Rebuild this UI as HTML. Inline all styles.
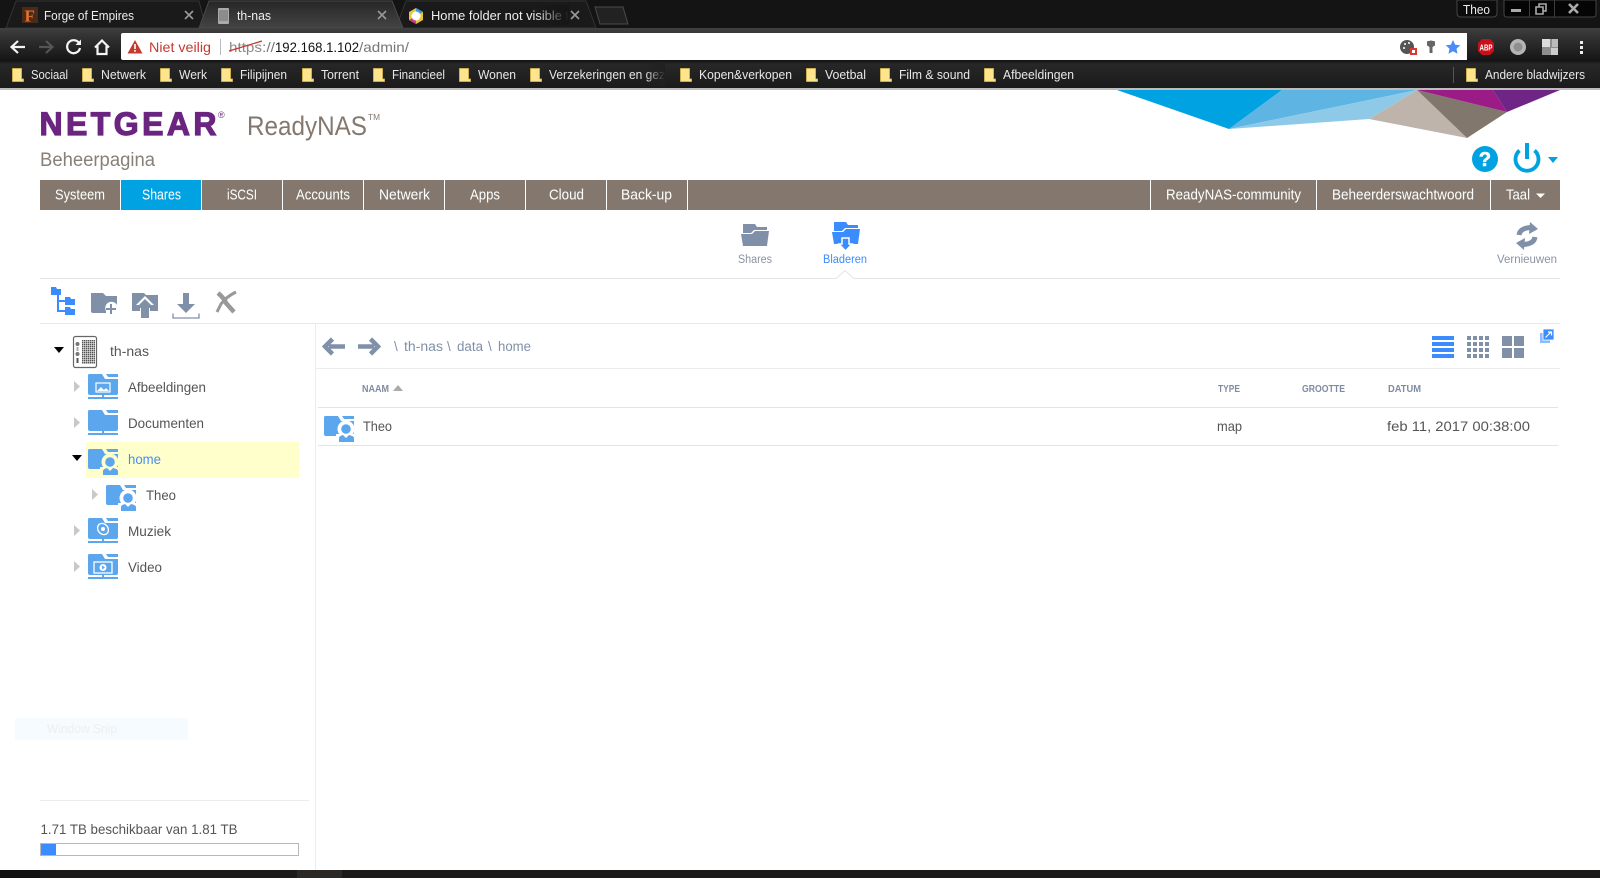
<!DOCTYPE html>
<html><head><meta charset="utf-8"><title>th-nas</title>
<style>
html,body{margin:0;padding:0;background:#fff;width:1600px;height:878px;overflow:hidden}
svg{display:block}
text{font-family:"Liberation Sans",sans-serif;font-size:14px}
.tb text{font-size:13px;fill:#e8e8e8}
.nav text{font-size:14.5px;fill:#fff}
.tree text{font-size:14px;fill:#555}
.hd text{font-size:10px;font-weight:bold;fill:#7f8ba3}
.ic{fill:#8190a9}
</style></head><body>
<svg width="1600" height="878" viewBox="0 0 1600 878" xmlns="http://www.w3.org/2000/svg">
<defs>
<linearGradient id="tbar" x1="0" y1="0" x2="0" y2="1"><stop offset="0" stop-color="#414141"/><stop offset=".2" stop-color="#353535"/><stop offset="1" stop-color="#161616"/></linearGradient>
<linearGradient id="acttab" x1="0" y1="0" x2="0" y2="1"><stop offset="0" stop-color="#262626"/><stop offset="1" stop-color="#444"/></linearGradient>
<linearGradient id="bm" x1="0" y1="0" x2="0" y2="1"><stop offset="0" stop-color="#111"/><stop offset=".15" stop-color="#272727"/><stop offset="1" stop-color="#1b1b1b"/></linearGradient>
<linearGradient id="fadeB" x1="0" y1="0" x2="1" y2="0"><stop offset="0" stop-color="#202020" stop-opacity="0"/><stop offset="1" stop-color="#202020"/></linearGradient>
<linearGradient id="fadeT" x1="0" y1="0" x2="1" y2="0"><stop offset="0" stop-color="#161616" stop-opacity="0"/><stop offset="1" stop-color="#161616"/></linearGradient>
<pattern id="dots" width="2" height="2" patternUnits="userSpaceOnUse"><rect width="1.5" height="1.5" fill="#555"/></pattern>
<symbol id="sf" viewBox="0 0 30 25" overflow="visible">
<path fill="#5ca6ee" d="M0 1.5Q0 0 1.5 0H14L17 5H30V19Q30 21 28 21H2Q0 21 0 19Z"/>
<path fill="#5ca6ee" d="M18 0H30V3H20Z"/>
<rect x="14" y="21" width="2" height="2" fill="#5ca6ee"/>
<rect x="0" y="23" width="30" height="2" fill="#5ca6ee"/>
</symbol>
<symbol id="uf" viewBox="0 0 30 26" overflow="visible">
<path fill="#5ca6ee" d="M0 1.5Q0 0 1.5 0H14L17 5H30V18Q30 20 28 20H2Q0 20 0 18Z"/>
<path fill="#5ca6ee" d="M18 0H30V3H20Z"/>
<circle cx="22" cy="13" r="8.500" fill="#fff"/>
<rect x="12" y="18" width="18" height="8.500" fill="#fff"/>
<path fill="#fff" d="M24 14H30V20H24Z" opacity="0"/>
<circle cx="22" cy="13" r="4.800" fill="#5ca6ee"/>
<path fill="#5ca6ee" d="M15 26V22Q15 20 19 19L22 22L25 19Q30 20 30 22V26Z"/>
</symbol>
<symbol id="bmf" viewBox="0 0 12 14" overflow="visible">
<path fill="#fde58e" stroke="#e0bb50" stroke-width=".8" d="M.5.5H9.5V11H11.5V13.5H.5Z"/>
</symbol>
</defs>

<!-- tab strip -->
<rect width="1600" height="28" fill="#141414"/>
<path d="M6 28L16 1H199L206 28Z" fill="#1a1a1a" stroke="#333"/>
<path d="M396 28L406 1H586L596 28Z" fill="#1a1a1a" stroke="#333"/>
<path d="M199 28L209 1H392L403 28Z" fill="url(#acttab)" stroke="#4a4a4a"/>
<path d="M595 7H623L628 24H600Z" fill="#222" stroke="#4a4a4a"/>
<rect x="22" y="7" width="16" height="16" fill="#4a2a18"/><text x="24.500" y="21.500" style="font-size:17px;font-family:'Liberation Serif',serif;font-weight:bold;fill:#e8702a">F</text>
<rect x="218" y="8" width="11" height="16" rx="1" fill="#aaa"/><rect x="219" y="10" width="9" height="11" fill="#8c8c8c"/>
<path d="M416 8L423 12V20L416 24L409 20V12Z" fill="#e8c63a"/><path d="M416 8L423 12L416 16Z" fill="#3a9ad9"/><path d="M409 20L416 24L416 16Z" fill="#c93a8c"/><circle cx="416" cy="16" r="4.500" fill="#fff"/>
<text x="44" y="20" textLength="90" lengthAdjust="spacingAndGlyphs" fill="#eee" style="font-size:13px">Forge of Empires</text>
<text x="237" y="20" textLength="34" lengthAdjust="spacingAndGlyphs" fill="#eee" style="font-size:13px">th-nas</text>
<text x="431" y="20" textLength="138" lengthAdjust="spacingAndGlyphs" fill="#eee" style="font-size:13px">Home folder not visible t</text>
<rect x="535" y="5" width="34" height="20" fill="url(#fadeT)"/>
<g stroke="#999" stroke-width="1.600"><path d="M185 11l8 8M193 11l-8 8"/><path d="M378 11l8 8M386 11l-8 8"/><path d="M571 11l8 8M579 11l-8 8"/></g>

<!-- window controls -->
<path d="M1457 0V13Q1457 17 1461 17H1493Q1497 17 1497 13V0Z" fill="#0c0c0c" stroke="#444"/>
<text x="1463" y="14" textLength="27" lengthAdjust="spacingAndGlyphs" fill="#eee" style="font-size:13px">Theo</text>
<path d="M1504 0V14Q1504 17 1507 17H1593Q1596 17 1596 14V0Z" fill="#050505" stroke="#444"/>
<path d="M1529.500 0V17M1554.500 0V17" stroke="#3c3c3c"/>
<rect x="1511" y="9" width="10" height="3" fill="#aaa"/>
<path d="M1536 7h7v7h-7zM1539 7V4h7v7h-3" fill="none" stroke="#aaa" stroke-width="1.600"/>
<path d="M1569 4l9 9M1578 4l-9 9" stroke="#aaa" stroke-width="2.600"/>

<!-- toolbar -->
<rect y="28" width="1600" height="32" fill="url(#tbar)"/>
<g fill="none" stroke-width="2.200">
<path d="M25 47H12M18 41l-6.500 6 6.500 6" stroke="#f4f4f4"/>
<path d="M39 47H52M46 41l6.500 6-6.500 6" stroke="#555"/>
<path d="M79 43A6.500 6.500 0 1 0 80 48" stroke="#f4f4f4"/>
<path d="M95 47.500L102 40.500 109 47.500M97.500 46V54H106.500V46" stroke="#f4f4f4"/>
</g>
<path d="M81 39.500V45H75.500Z" fill="#f4f4f4"/>
<path d="M121 35Q121 33 123 33H1467V60H123Q121 60 121 58Z" fill="#fff"/>
<path d="M135 40L142.500 53.500H127.500Z" fill="#c5392e"/><rect x="134.200" y="44" width="1.600" height="5" fill="#fff"/><rect x="134.200" y="50" width="1.600" height="1.700" fill="#fff"/>
<text x="149" y="52" textLength="62" lengthAdjust="spacingAndGlyphs" fill="#c5392e" style="font-size:14px">Niet veilig</text>
<rect x="220" y="39" width="1" height="16" fill="#bbb"/>
<text x="229" y="52" textLength="33" lengthAdjust="spacingAndGlyphs" fill="#8a8a8a" style="font-size:14px">https</text>
<path d="M229 51L262 41" stroke="#c5392e" stroke-width="1.300"/>
<text x="262" y="52" textLength="13" lengthAdjust="spacingAndGlyphs" fill="#777" style="font-size:14px">://</text>
<text x="275" y="52" textLength="84" lengthAdjust="spacingAndGlyphs" fill="#111" style="font-size:14px">192.168.1.102</text>
<text x="359" y="52" textLength="50" lengthAdjust="spacingAndGlyphs" fill="#777" style="font-size:14px">/admin/</text>
<!-- ext icons -->
<ellipse cx="1407" cy="47" rx="7" ry="7" fill="#555"/><circle cx="1405" cy="44" r="1" fill="#fff"/><circle cx="1409" cy="43" r="1" fill="#fff"/><circle cx="1404" cy="48" r="1" fill="#fff"/>
<rect x="1410" y="48" width="7" height="7" fill="#d83a34"/><rect x="1412" y="50" width="3" height="3" fill="#fff"/>
<circle cx="1431" cy="44" r="3.500" fill="#666"/><rect x="1427" y="41" width="8" height="5" rx="1" fill="#666"/><rect x="1429.500" y="46" width="3" height="7" fill="#666"/>
<path d="M1453 40l2.200 4.700 5.100.6-3.800 3.500 1 5-4.500-2.500-4.500 2.500 1-5-3.800-3.500 5.100-.6z" fill="#4a8cf7"/>
<path d="M1482 39h8l4 4v8l-4 4h-8l-4-4v-8z" fill="#c8101a"/>
<text x="1479.500" y="50.500" textLength="13" lengthAdjust="spacingAndGlyphs" fill="#fff" style="font-size:8.500px;font-weight:bold">ABP</text>
<circle cx="1518" cy="47" r="8" fill="#b5b5b5"/><circle cx="1518" cy="47" r="4.500" fill="#8f8f8f"/>
<rect x="1542" y="39" width="16" height="16" fill="#8e8e8e"/><rect x="1542" y="39" width="8" height="8" fill="#ddd"/><rect x="1552" y="39" width="6" height="8" fill="#bbb"/><rect x="1551" y="48" width="7" height="7" fill="#ccc"/>
<g fill="#eee"><rect x="1580" y="41" width="3" height="3"/><rect x="1580" y="46" width="3" height="3"/><rect x="1580" y="51" width="3" height="3"/></g>

<!-- bookmarks -->
<rect y="60" width="1600" height="28" fill="url(#bm)"/>
<rect y="88" width="1600" height="2" fill="#bdbdbd"/>
<g>
<use href="#bmf" x="12" y="68" width="12" height="14"/>
<use href="#bmf" x="82" y="68" width="12" height="14"/>
<use href="#bmf" x="160" y="68" width="12" height="14"/>
<use href="#bmf" x="221" y="68" width="12" height="14"/>
<use href="#bmf" x="302" y="68" width="12" height="14"/>
<use href="#bmf" x="373" y="68" width="12" height="14"/>
<use href="#bmf" x="459" y="68" width="12" height="14"/>
<use href="#bmf" x="530" y="68" width="12" height="14"/>
<use href="#bmf" x="680" y="68" width="12" height="14"/>
<use href="#bmf" x="806" y="68" width="12" height="14"/>
<use href="#bmf" x="880" y="68" width="12" height="14"/>
<use href="#bmf" x="984" y="68" width="12" height="14"/>
<use href="#bmf" x="1466" y="68" width="12" height="14"/>
</g>
<g class="tb">
<text x="31" y="79" textLength="37" lengthAdjust="spacingAndGlyphs">Sociaal</text>
<text x="101" y="79" textLength="45" lengthAdjust="spacingAndGlyphs">Netwerk</text>
<text x="179" y="79" textLength="28" lengthAdjust="spacingAndGlyphs">Werk</text>
<text x="240" y="79" textLength="47" lengthAdjust="spacingAndGlyphs">Filipijnen</text>
<text x="321" y="79" textLength="38" lengthAdjust="spacingAndGlyphs">Torrent</text>
<text x="392" y="79" textLength="53" lengthAdjust="spacingAndGlyphs">Financieel</text>
<text x="478" y="79" textLength="38" lengthAdjust="spacingAndGlyphs">Wonen</text>
<text x="549" y="79" textLength="116" lengthAdjust="spacingAndGlyphs">Verzekeringen en gez</text>
<text x="699" y="79" textLength="93" lengthAdjust="spacingAndGlyphs">Kopen&amp;verkopen</text>
<text x="825" y="79" textLength="41" lengthAdjust="spacingAndGlyphs">Voetbal</text>
<text x="899" y="79" textLength="71" lengthAdjust="spacingAndGlyphs">Film &amp; sound</text>
<text x="1003" y="79" textLength="71" lengthAdjust="spacingAndGlyphs">Afbeeldingen</text>
<text x="1485" y="79" textLength="100" lengthAdjust="spacingAndGlyphs">Andere bladwijzers</text>
</g>
<rect x="645" y="62" width="20" height="24" fill="url(#fadeB)"/>
<rect x="1453" y="67" width="1" height="16" fill="#555"/>

<!-- header -->
<polygon points="1117,90 1282,90 1229,129" fill="#00a2e1"/>
<polygon points="1282,90 1417,90 1229,129" fill="#5eb5e4"/>
<polygon points="1417,90 1369,119 1229,129" fill="#8ecae8"/>
<polygon points="1417,90 1369,119 1467,138" fill="#bfb4ab"/>
<polygon points="1417,90 1507,112 1467,138" fill="#82776d"/>
<polygon points="1417,90 1493,90 1507,112" fill="#9b1b87"/>
<polygon points="1493,90 1560,90 1507,112" fill="#6e2585"/>

<text x="39.500" y="135" textLength="177" lengthAdjust="spacing" fill="#6b2580" stroke="#6b2580" stroke-width="1.200" style="font-size:32px;font-weight:bold">NETGEAR</text>
<text x="218" y="118" fill="#6b2580" style="font-size:9px">®</text>
<text x="247" y="135" textLength="120" lengthAdjust="spacingAndGlyphs" fill="#84786e" style="font-size:27px">ReadyNAS</text>
<text x="368" y="120" textLength="12" lengthAdjust="spacingAndGlyphs" fill="#84786e" style="font-size:8px">TM</text>
<text x="40" y="166" textLength="115" lengthAdjust="spacingAndGlyphs" fill="#887f76" style="font-size:19px">Beheerpagina</text>

<circle cx="1485" cy="159" r="13" fill="#00a2e1"/>
<text x="1485" y="166" text-anchor="middle" fill="#fff" stroke="#fff" stroke-width=".6" style="font-size:20px;font-weight:bold">?</text>
<path d="M1519.500 150.500A11.500 11.500 0 1 0 1534.500 150.500" fill="none" stroke="#00a2e1" stroke-width="3.800"/>
<rect x="1525" y="143" width="4" height="16" fill="#00a2e1"/>
<polygon points="1548,157 1558,157 1553,163" fill="#00a2e1"/>

<!-- nav -->
<rect x="40" y="180" width="1520" height="30" fill="#84786e"/>
<rect x="121" y="180" width="80" height="30" fill="#00a2e1"/>
<g fill="#fff">
<rect x="120" y="180" width="1" height="30"/><rect x="201" y="180" width="1" height="30"/><rect x="282" y="180" width="1" height="30"/><rect x="363" y="180" width="1" height="30"/><rect x="444" y="180" width="1" height="30"/><rect x="525" y="180" width="1" height="30"/><rect x="606" y="180" width="1" height="30"/><rect x="687" y="180" width="1" height="30"/><rect x="1150" y="180" width="1" height="30"/><rect x="1316" y="180" width="1" height="30"/><rect x="1490" y="180" width="1" height="30"/>
</g>
<g class="nav">
<text x="55" y="199.500" textLength="50" lengthAdjust="spacingAndGlyphs">Systeem</text>
<text x="142" y="199.500" textLength="39" lengthAdjust="spacingAndGlyphs">Shares</text>
<text x="227" y="199.500" textLength="30" lengthAdjust="spacingAndGlyphs">iSCSI</text>
<text x="296" y="199.500" textLength="54" lengthAdjust="spacingAndGlyphs">Accounts</text>
<text x="379" y="199.500" textLength="51" lengthAdjust="spacingAndGlyphs">Netwerk</text>
<text x="470" y="199.500" textLength="30" lengthAdjust="spacingAndGlyphs">Apps</text>
<text x="549" y="199.500" textLength="35" lengthAdjust="spacingAndGlyphs">Cloud</text>
<text x="621" y="199.500" textLength="51" lengthAdjust="spacingAndGlyphs">Back-up</text>
<text x="1166" y="199.500" textLength="135" lengthAdjust="spacingAndGlyphs">ReadyNAS-community</text>
<text x="1332" y="199.500" textLength="142" lengthAdjust="spacingAndGlyphs">Beheerderswachtwoord</text>
<text x="1506" y="199.500" textLength="24" lengthAdjust="spacingAndGlyphs">Taal</text>
</g>
<polygon points="1536,193.500 1545,193.500 1540.500,198" fill="#fff"/>

<!-- subnav -->
<g class="ic"><path d="M743 224H755L757 227H767V230H754L751 233H743Z"/><path d="M741 234H752L755 231H769L767 246H743Z"/></g>
<g fill="#3a8cff"><path d="M834 222H846L848 225H858V228H845L842 231H834Z"/><path d="M832 232H843L846 229H860L858 244H834Z"/></g>
<path d="M842 238V244H839L845.500 251L852 244H849V238Z" fill="#3a8cff" stroke="#fff" stroke-width="1.500"/>
<text x="738" y="263" textLength="34" lengthAdjust="spacingAndGlyphs" fill="#8a93a3" style="font-size:11.500px">Shares</text>
<text x="823" y="263" textLength="44" lengthAdjust="spacingAndGlyphs" fill="#3a8cff" style="font-size:11.500px">Bladeren</text>
<path d="M1519 235Q1520 228 1531 227.500M1535 237Q1534 244 1523 244.500" fill="none" stroke="#8190a9" stroke-width="5"/>
<polygon class="ic" points="1530,222 1538,229 1529,234"/>
<polygon class="ic" points="1524,250 1516,243 1525,238"/>
<text x="1497" y="263" textLength="60" lengthAdjust="spacingAndGlyphs" fill="#8a93a3" style="font-size:11.500px">Vernieuwen</text>
<path d="M40 278.500H836L845 270.500L854 278.500H1560" fill="none" stroke="#e4e4e4"/>

<!-- toolbar icons -->
<g fill="#3a8cff">
<path d="M51 287H56L57 289H61V295H51Z"/><path d="M65 297H70L71 299H75V305H65Z"/><path d="M65 307H70L71 309H75V315H65Z"/>
<path d="M57 295H59V300H65V302H59V310H65V312H57Z"/>
</g>
<g class="ic">
<path d="M91 293H103L106 296H117V305A6 6 0 0 0 106 311V313H93Q91 313 91 311Z"/>
<path d="M110 304H112V308H116V310H112V314H110V310H106V308H110Z"/>
<path d="M132 293H144L146 295H158V311H150V305H154L145 296L136 305H140V311H132Z"/>
<path d="M145 299L154 308H149V318H141V308H136Z"/>
<path d="M183 293H189V304H195L186 313L177 304H183Z"/>
</g>
<path d="M173 313.500V318H199V313.500" fill="none" stroke="#8190a9" stroke-width="1.300"/>
<path d="M218 293Q224 298 226 303L234 312" fill="none" stroke="#999" stroke-width="4.500"/>
<path d="M236 292Q226 297 221 304L217 312" fill="none" stroke="#999" stroke-width="3"/>
<rect x="40" y="323" width="1520" height="1" fill="#e9e9e9"/>
<rect x="315" y="323" width="1" height="547" fill="#ececec"/>

<!-- tree -->
<polygon points="54,347 64,347 59,353" fill="#000"/>
<rect x="73.500" y="336.500" width="23" height="31" rx="2" fill="#fff" stroke="#666" stroke-width="1.200"/>
<rect x="82" y="340" width="13" height="24" fill="url(#dots)"/>
<circle cx="77.500" cy="344" r="2" fill="#777"/><circle cx="77.500" cy="354" r="2" fill="#777"/><rect x="76.500" y="358" width="2" height="5" fill="#555"/><rect x="76.500" y="347" width="2" height="4" fill="#aaa"/>
<g fill="#c8c8c8">
<polygon points="74,381 80,386.500 74,392"/><polygon points="74,417 80,422.500 74,428"/><polygon points="92,489 98,494.500 92,500"/><polygon points="74,525 80,530.500 74,536"/><polygon points="74,561 80,566.500 74,572"/>
</g>
<rect x="86" y="442" width="213" height="36" fill="#ffffcc"/>
<polygon points="72,455 82,455 77,461" fill="#000"/>
<use href="#sf" x="88" y="374" width="30" height="25"/>
<rect x="96" y="383" width="14" height="9" fill="none" stroke="#fff" stroke-width="1.200"/><path d="M97 391L101 387L104 390L106 388L109 391Z" fill="#fff"/>
<use href="#sf" x="88" y="410" width="30" height="25"/>
<rect x="88" y="449" width="30" height="26" fill="none"/>
<path fill="#5ca6ee" d="M88 450.500Q88 449 89.500 449H102L105 454H118V467Q118 469 116 469H90Q88 469 88 467Z"/><path fill="#5ca6ee" d="M106 449H118V452H108Z"/>
<circle cx="110" cy="462" r="8.500" fill="#ffffcc"/><rect x="100" y="467" width="18" height="8.500" fill="#ffffcc"/><circle cx="110" cy="462" r="4.800" fill="#5ca6ee"/><path fill="#5ca6ee" d="M103 475V471Q103 469 107 468L110 471L113 468Q118 469 118 471V475Z"/>
<use href="#uf" x="106" y="485" width="30" height="26"/>
<use href="#sf" x="88" y="518" width="30" height="25"/>
<ellipse cx="103" cy="529" rx="5" ry="6" transform="rotate(-40 103 529)" fill="none" stroke="#fff" stroke-width="1.300"/><circle cx="103" cy="529" r="2" fill="#fff"/>
<use href="#sf" x="88" y="554" width="30" height="25"/>
<rect x="94" y="562" width="18" height="11" fill="none" stroke="#fff" stroke-width="1.300"/><circle cx="103" cy="567.500" r="3.500" fill="#fff"/><polygon points="102,565.500 105,567.500 102,569.500" fill="#5ca6ee"/>
<g class="tree">
<text x="110" y="356" textLength="39" lengthAdjust="spacingAndGlyphs">th-nas</text>
<text x="128" y="392" textLength="78" lengthAdjust="spacingAndGlyphs">Afbeeldingen</text>
<text x="128" y="428" textLength="76" lengthAdjust="spacingAndGlyphs">Documenten</text>
<text x="128" y="464" textLength="33" lengthAdjust="spacingAndGlyphs" style="fill:#4a8cf5">home</text>
<text x="146" y="500" textLength="30" lengthAdjust="spacingAndGlyphs">Theo</text>
<text x="128" y="536" textLength="43" lengthAdjust="spacingAndGlyphs">Muziek</text>
<text x="128" y="572" textLength="34" lengthAdjust="spacingAndGlyphs">Video</text>
</g>

<!-- file pane -->
<path d="M345 346.500H329M332.500 339L325 346.500L332.500 354" fill="none" stroke="#8190a9" stroke-width="4.500"/>
<path d="M358 346.500H374M370.500 339L378 346.500L370.500 354" fill="none" stroke="#8190a9" stroke-width="4.500"/>
<g fill="#8190a9" style="font-size:13.500px">
<text x="394" y="351" style="font-size:13.500px">\</text>
<text x="404" y="351" textLength="39" lengthAdjust="spacingAndGlyphs" style="font-size:13.500px">th-nas</text>
<text x="447" y="351" style="font-size:13.500px">\</text>
<text x="457" y="351" textLength="26" lengthAdjust="spacingAndGlyphs" style="font-size:13.500px">data</text>
<text x="488" y="351" style="font-size:13.500px">\</text>
<text x="498" y="351" textLength="33" lengthAdjust="spacingAndGlyphs" style="font-size:13.500px">home</text>
</g>
<rect x="316" y="368" width="1244" height="1" fill="#ececec"/>
<g fill="#3a8cff"><rect x="1432" y="336" width="22" height="4"/><rect x="1432" y="342" width="22" height="4"/><rect x="1432" y="348" width="22" height="4"/><rect x="1432" y="354" width="22" height="4"/></g>
<g class="ic">
<rect x="1467" y="336" width="4" height="4"/><rect x="1473" y="336" width="4" height="4"/><rect x="1479" y="336" width="4" height="4"/><rect x="1485" y="336" width="4" height="4"/>
<rect x="1467" y="342" width="4" height="4"/><rect x="1473" y="342" width="4" height="4"/><rect x="1479" y="342" width="4" height="4"/><rect x="1485" y="342" width="4" height="4"/>
<rect x="1467" y="348" width="4" height="4"/><rect x="1473" y="348" width="4" height="4"/><rect x="1479" y="348" width="4" height="4"/><rect x="1485" y="348" width="4" height="4"/>
<rect x="1467" y="354" width="4" height="4"/><rect x="1473" y="354" width="4" height="4"/><rect x="1479" y="354" width="4" height="4"/><rect x="1485" y="354" width="4" height="4"/>
<rect x="1502" y="336" width="10" height="10"/><rect x="1514" y="336" width="10" height="10"/><rect x="1502" y="348" width="10" height="10"/><rect x="1514" y="348" width="10" height="10"/>
</g>
<rect x="1540" y="333" width="10" height="10" fill="#8cbcff"/>
<rect x="1543" y="329" width="11" height="11" fill="#3a8cff" stroke="#fff" stroke-width=".8"/>
<path d="M1545.500 337.500L1551 332M1548 332H1551.500V335.500" fill="none" stroke="#fff" stroke-width="1.200"/>

<g class="hd">
<text x="362" y="392" textLength="27" lengthAdjust="spacingAndGlyphs">NAAM</text>
<text x="1218" y="392" textLength="22" lengthAdjust="spacingAndGlyphs">TYPE</text>
<text x="1302" y="392" textLength="43" lengthAdjust="spacingAndGlyphs">GROOTTE</text>
<text x="1388" y="392" textLength="33" lengthAdjust="spacingAndGlyphs">DATUM</text>
</g>
<polygon points="393,391 403,391 398,385" fill="#aaa"/>
<rect x="318" y="407" width="1240" height="1" fill="#e4e4e4"/>
<use href="#uf" x="324" y="416" width="30" height="26"/>
<text x="363" y="431" textLength="29" lengthAdjust="spacingAndGlyphs" fill="#555" style="font-size:14px">Theo</text>
<text x="1217" y="431" textLength="25" lengthAdjust="spacingAndGlyphs" fill="#555" style="font-size:14px">map</text>
<text x="1387" y="431" textLength="143" lengthAdjust="spacingAndGlyphs" fill="#555" style="font-size:14px">feb 11, 2017 00:38:00</text>
<rect x="318" y="445" width="1240" height="1" fill="#e4e4e4"/>

<!-- bottom left -->
<rect x="15" y="718" width="173" height="22" fill="#f5fbff"/>
<text x="47" y="733" textLength="70" lengthAdjust="spacingAndGlyphs" fill="#eeeeee" style="font-size:12.500px">Window Snip</text>
<rect x="40" y="800" width="269" height="1" fill="#ececec"/>
<text x="40.500" y="834" textLength="197" lengthAdjust="spacingAndGlyphs" fill="#555" style="font-size:14px">1.71 TB beschikbaar van 1.81 TB</text>
<rect x="40.500" y="843.500" width="258" height="12" fill="#fff" stroke="#b8b8b8"/>
<rect x="41" y="844" width="15" height="11" fill="#3a8cff"/>

<!-- bottom strip -->
<rect y="870" width="1600" height="8" fill="#1c1a18"/>
<rect x="0" y="870" width="40" height="8" fill="#111"/>
<rect x="297" y="870" width="45" height="8" fill="#2a2725"/>
</svg>
</body></html>
